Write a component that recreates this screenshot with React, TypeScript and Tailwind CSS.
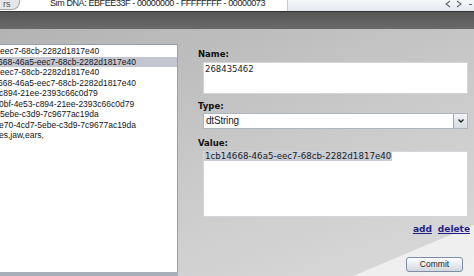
import React from "react";

const rows: { text: string; ml: string; sel?: boolean }[] = [
  { text: "eec7-68cb-2282d1817e40", ml: "ml-0" },
  { text: "668-46a5-eec7-68cb-2282d1817e40", ml: "ml-[-2px]", sel: true },
  { text: "eec7-68cb-2282d1817e40", ml: "ml-0" },
  { text: "668-46a5-eec7-68cb-2282d1817e40", ml: "ml-[-2px]" },
  { text: "c894-21ee-2393c66c0d79", ml: "ml-[-1px]" },
  { text: "0bf-4e53-c894-21ee-2393c66c0d79", ml: "ml-[-1px]" },
  { text: "5ebe-c3d9-7c9677ac19da", ml: "ml-0" },
  { text: "e70-4cd7-5ebe-c3d9-7c9677ac19da", ml: "ml-[-1px]" },
  { text: "es,jaw,ears,", ml: "ml-[-1px]" },
];

const label = "h-[11px] leading-[11px] text-[8.5px] font-bold text-[#111] [font-family:'DejaVu_Sans',Verdana,sans-serif]";

export default function App() {
  return (
    <div className="relative w-[474px] h-[276px] overflow-hidden bg-white [font-family:'Liberation_Sans',Arial,sans-serif]">
      {/* top strip */}
      <div className="flex h-[11px] bg-white">
        <div className="w-[20px] h-[10px] bg-[#e6e6e6] border border-l-0 border-t-0 border-[#a8a8a8] rounded-br-[8px] text-[9px] leading-[8px] text-[#555] pl-[3px] overflow-hidden">
          rs
        </div>
        <div className="ml-[30px] w-[237px] text-[9px] leading-[9px] mt-[-1px] tracking-[-0.4px] text-[#1a1a1a] whitespace-nowrap overflow-hidden">
          Sim DNA: EBFEE33F - 00000000 - FFFFFFFF - 00000073
        </div>
        <div className="flex-1 flex items-start justify-end gap-[3px] pr-[2px] border-l border-[#c4ccd4] bg-[linear-gradient(to_bottom,#f6f8fa,#e4e9ef)]">
          <svg width="8" height="8" viewBox="0 0 8 8">
            <path d="M6 1 L2 4 L6 7" fill="none" stroke="#666" strokeWidth="1.1" />
          </svg>
          <svg width="8" height="8" viewBox="0 0 8 8">
            <path d="M2 1 L6 4 L2 7" fill="none" stroke="#666" strokeWidth="1.1" />
          </svg>
          <div className="w-[3px] h-[1px] bg-[#666] mt-[4px] ml-[3px]" />
        </div>
      </div>
      {/* dark bar */}
      <div className="h-[18px] border-t border-[#343434] bg-[linear-gradient(to_bottom,#565656,#6a6a6a)]" />
      {/* body */}
      <div className="flex h-[247px] bg-[linear-gradient(160deg,#b3b3b3,#cbcbcb_55%,#dadada)]">
        <div className="w-[178px] flex flex-col pt-[15px]">
          <div className="flex-1 bg-white border-t border-r border-[#95a0ab] pt-[1px] overflow-hidden">
            {rows.map((r, i) => (
              <div
                key={i}
                className={`h-[10.5px] leading-[10.5px] text-[8.5px] text-[#151515] whitespace-nowrap ${r.sel ? "bg-[#c3c5d0]" : ""}`}
              >
                <span className={`inline-block ${r.ml}`}>{r.text}</span>
              </div>
            ))}
          </div>
          <div className="h-[4px] bg-[#a7afb8]" />
        </div>
        <div className="relative flex-1 flex flex-col pl-[20px] pr-[6px]">
          <svg
            className="absolute inset-0 w-full h-full"
            viewBox="0 0 296 247"
            preserveAspectRatio="none"
          >
            <polygon points="175,247 296,196 296,247" fill="#f3f3f3" opacity="0.85" />
          </svg>
          <div className="relative flex flex-col">
            <div className={`${label} mt-[20px]`}>Name:</div>
            <div className="ml-[5px] mt-[2px] h-[32px] bg-white border border-[#d2d6da] pl-[1px] pt-[1px] text-[8.5px] leading-[10px] text-[#222] [font-family:'DejaVu_Sans',Verdana,sans-serif]">
              268435462
            </div>
            <div className={`${label} mt-[7px]`}>Type:</div>
            <div className="ml-[5px] mt-[1px] h-[16px] bg-white border border-[#aeb7c1] flex items-stretch">
              <div className="flex-1 pl-[2px] text-[10px] leading-[14px] text-[#222] tracking-[-0.2px]">dtString</div>
              <div className="w-[14px] border-l border-[#98a4b4] bg-[linear-gradient(to_bottom,#f2f4f7,#d6dbe3)] flex items-center justify-center">
                <svg width="8" height="6" viewBox="0 0 8 6">
                  <path d="M1.5 1.5 L4 4 L6.5 1.5" fill="none" stroke="#222" strokeWidth="1.4" />
                </svg>
              </div>
            </div>
            <div className={`${label} mt-[9px]`}>Value:</div>
            <div className="ml-[5px] mt-[2px] h-[66px] bg-white border border-[#d2d6da] text-[8.7px] leading-[9px] text-[#222] [font-family:'DejaVu_Sans',Verdana,sans-serif]">
              <span className="inline-block bg-[#c8ccd4] pl-[1px] pr-[1px] whitespace-nowrap">1cb14668-46a5-eec7-68cb-2282d1817e40</span>
            </div>
            <div className="mt-[7px] h-[11px] mr-[-2px] flex justify-end gap-[6px] text-[9px] leading-[11px] font-bold text-[#1f1f88] underline [font-family:'DejaVu_Sans',Verdana,sans-serif]">
              <span>add</span>
              <span>delete</span>
            </div>
            <div className="mt-[22px] flex justify-end mr-[5px]">
              <div className="w-[57px] h-[15px] rounded-[3px] border border-[#7e8ea6] bg-[linear-gradient(to_bottom,#ffffff,#e8ebf0_50%,#d2d7df)] text-[8.5px] leading-[13px] text-center text-[#222]">
                Commit
              </div>
            </div>
          </div>
        </div>
      </div>
    </div>
  );
}
